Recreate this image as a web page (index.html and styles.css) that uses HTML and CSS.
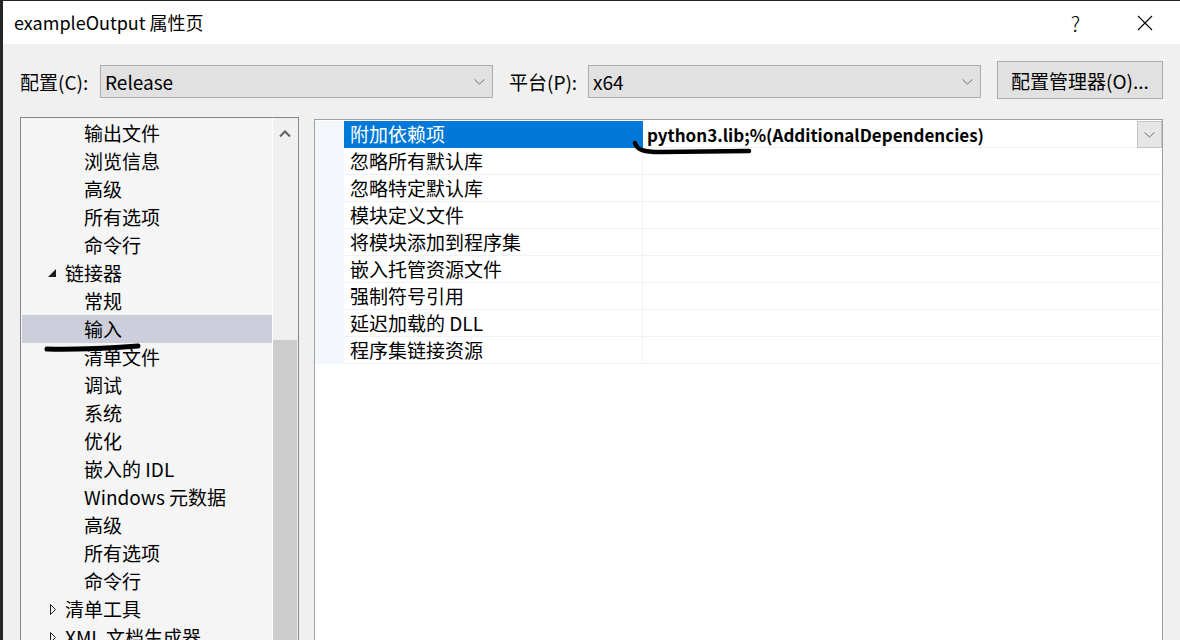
FILE: index.html
```html
<!DOCTYPE html>
<html lang="zh-CN">

<head>
    <meta charset="UTF-8">
    <title>exampleOutput 属性页</title>
    <link rel="stylesheet" href="styles.css">
</head>

<body>
    <div class="window">
        <div class="titlebar">
            <span class="title">exampleOutput 属性页</span>
            <span class="title-btn help">?</span>
            <span class="title-btn close">
                <svg width="16" height="16" viewBox="0 0 16 16"><path d="M1 1 L15 15 M15 1 L1 15" stroke="#000" stroke-width="1.1" fill="none"/></svg>
            </span>
        </div>

        <div class="content">
            <div class="config-row">
                <label class="config-label">配置(C):</label>
                <div class="select">
                    <span>Release</span>
                    <svg width="11" height="6" viewBox="0 0 11 6"><path d="M0.5 0.5 L5.5 5 L10.5 0.5" stroke="#707070" fill="none"/></svg>
                </div>
                <label class="config-label platform">平台(P):</label>
                <div class="select">
                    <span>x64</span>
                    <svg width="11" height="6" viewBox="0 0 11 6"><path d="M0.5 0.5 L5.5 5 L10.5 0.5" stroke="#707070" fill="none"/></svg>
                </div>
                <button class="btn">配置管理器(O)...</button>
            </div>

            <div class="panels">
                <div class="tree-panel">
                    <ul class="tree">
                        <li class="tree-item">输出文件</li>
                        <li class="tree-item">浏览信息</li>
                        <li class="tree-item">高级</li>
                        <li class="tree-item">所有选项</li>
                        <li class="tree-item">命令行</li>
                        <li class="tree-item parent">
                            <span class="caret"><svg width="18" height="28" viewBox="0 0 18 28"><polygon points="9,10 9,18 1,18" fill="#1e1e1e"/></svg></span>链接器
                        </li>
                        <li class="tree-item">常规</li>
                        <li class="tree-item selected">输入</li>
                        <li class="tree-item">清单文件</li>
                        <li class="tree-item">调试</li>
                        <li class="tree-item">系统</li>
                        <li class="tree-item">优化</li>
                        <li class="tree-item">嵌入的 IDL</li>
                        <li class="tree-item">Windows 元数据</li>
                        <li class="tree-item">高级</li>
                        <li class="tree-item">所有选项</li>
                        <li class="tree-item">命令行</li>
                        <li class="tree-item parent">
                            <span class="caret"><svg width="18" height="28" viewBox="0 0 18 28"><polygon points="3.5,9.5 8.5,14.5 3.5,19.5" fill="none" stroke="#1e1e1e"/></svg></span>清单工具
                        </li>
                        <li class="tree-item parent">
                            <span class="caret"><svg width="18" height="28" viewBox="0 0 18 28"><polygon points="3.5,9.5 8.5,14.5 3.5,19.5" fill="none" stroke="#1e1e1e"/></svg></span>XML 文档生成器
                        </li>
                    </ul>
                    <div class="scrollbar">
                        <div class="scroll-up">
                            <svg width="12" height="8" viewBox="0 0 12 8"><path d="M1 6.5 L6 1.5 L11 6.5" stroke="#606060" stroke-width="2" fill="none"/></svg>
                        </div>
                        <div class="scroll-thumb"></div>
                    </div>
                </div>

                <div class="prop-panel">
                    <div class="prop-row">
                        <div class="gutter"></div>
                        <div class="prop-name selected">附加依赖项</div>
                        <div class="prop-value">
                            <span class="value-text">python3.lib;%(AdditionalDependencies)</span>
                            <span class="value-drop">
                                <svg width="11" height="6" viewBox="0 0 11 6"><path d="M0.5 0.5 L5.5 5 L10.5 0.5" stroke="#707070" fill="none"/></svg>
                            </span>
                        </div>
                    </div>
                    <div class="prop-row"><div class="gutter"></div><div class="prop-name">忽略所有默认库</div><div class="prop-value"></div></div>
                    <div class="prop-row"><div class="gutter"></div><div class="prop-name">忽略特定默认库</div><div class="prop-value"></div></div>
                    <div class="prop-row"><div class="gutter"></div><div class="prop-name">模块定义文件</div><div class="prop-value"></div></div>
                    <div class="prop-row"><div class="gutter"></div><div class="prop-name">将模块添加到程序集</div><div class="prop-value"></div></div>
                    <div class="prop-row"><div class="gutter"></div><div class="prop-name">嵌入托管资源文件</div><div class="prop-value"></div></div>
                    <div class="prop-row"><div class="gutter"></div><div class="prop-name">强制符号引用</div><div class="prop-value"></div></div>
                    <div class="prop-row"><div class="gutter"></div><div class="prop-name">延迟加载的 DLL</div><div class="prop-value"></div></div>
                    <div class="prop-row"><div class="gutter"></div><div class="prop-name">程序集链接资源</div><div class="prop-value"></div></div>
                </div>
            </div>
        </div>
    </div>

    <!-- hand-drawn marks on top of the screenshot -->
    <svg class="marks" width="1180" height="640" viewBox="0 0 1180 640">
        <path d="M47 349 C 80 350, 110 348, 138 346" stroke="#000" stroke-width="5" stroke-linecap="round" fill="none"/>
        <path d="M635 143 C 637 150, 644 152, 660 152 L 749 151" stroke="#000" stroke-width="4.5" stroke-linecap="round" fill="none"/>
    </svg>
</body>

</html>
```

FILE: styles.css
```css
* {
    margin: 0;
    padding: 0;
    box-sizing: border-box;
}

html,
body {
    height: 100%;
    overflow: hidden;
}

body {
    position: relative;
    background-color: #262626;
    font-family: "Noto Sans CJK SC", "Noto Sans", sans-serif;
    font-size: 19px;
    color: #000;
}

.window {
    margin: 1px 0 0 3px;
    height: 639px;
    background-color: #f0f0f0;
    overflow: hidden;
}

.titlebar {
    height: 43px;
    background-color: #fff;
    display: flex;
    align-items: center;
    padding-left: 11px;
}

.title {
    flex: 1;
    font-size: 18px;
    line-height: 43px;
}

.title-btn {
    width: 69px;
    height: 43px;
    display: flex;
    align-items: center;
    justify-content: center;
}

.help {
    font-size: 21px;
    font-weight: 300;
}

.close {
    margin-right: 1px;
}

.content {
    padding: 17px 0 0 17px;
}

.config-row {
    display: flex;
    align-items: flex-start;
    height: 38px;
}

.config-label {
    width: 80px;
    height: 33px;
    margin-top: 4px;
    display: flex;
    align-items: center;
}

.config-label.platform {
    width: 79px;
    margin-left: 16px;
}

.select {
    width: 393px;
    height: 33px;
    margin-top: 4px;
    border: 1px solid #adadad;
    background-color: #e1e1e1;
    display: flex;
    align-items: center;
    justify-content: space-between;
    padding: 0 7px 0 4px;
}

.btn {
    width: 166px;
    height: 38px;
    margin-left: 16px;
    border: 1px solid #adadad;
    background-color: #e1e1e1;
    font-family: inherit;
    font-size: 19px;
    color: #000;
}

.panels {
    display: flex;
    gap: 15px;
    margin-top: 18px;
    height: 540px;
}

.tree-panel {
    width: 279px;
    border: 1px solid #828790;
    background-color: #f5f5f5;
    display: flex;
}

.tree {
    flex: 1;
    list-style: none;
    padding: 1px 0 0 1px;
    border-right: 1px solid #fff;
}

.tree-item {
    height: 28px;
    line-height: 28px;
    padding-left: 62px;
    white-space: nowrap;
    display: flex;
    align-items: center;
}

.tree-item.parent {
    padding-left: 25px;
}

.tree-item.selected {
    background-color: #cccedb;
}

.caret {
    width: 18px;
    height: 28px;
    display: flex;
}

.scrollbar {
    width: 25px;
    background-color: #f0f0f0;
    display: flex;
    flex-direction: column;
}

.scroll-up {
    height: 222px;
    display: flex;
    justify-content: center;
    padding: 12px 1px 0 0;
}

.scroll-thumb {
    flex: 1;
    width: 24px;
    background-color: #cdcdcd;
}

.prop-panel {
    width: 849px;
    margin-top: 2px;
    border: 1px solid #a0a0a0;
    background-color: #fff;
    padding-top: 1px;
}

.prop-row {
    display: flex;
    height: 27px;
}

.gutter {
    width: 29px;
    background-color: #f3f6fb;
}

.prop-name {
    width: 299px;
    padding-left: 6px;
    line-height: 26px;
    border-right: 1px solid #f0f2f6;
    border-bottom: 1px solid #eef1f6;
    white-space: nowrap;
}

.prop-name.selected {
    background-color: #0078d7;
    color: #fff;
    border-color: #0078d7;
}

.prop-value {
    flex: 1;
    display: flex;
    align-items: center;
    border-bottom: 1px solid #eef1f6;
    padding-left: 4px;
}

.value-text {
    flex: 1;
    font-weight: 700;
    font-size: 17px;
}

.value-drop {
    width: 25px;
    height: 27px;
    align-self: flex-start;
    background-color: #e6e6e6;
    border: 1px solid #c4c4c4;
    display: flex;
    align-items: center;
    justify-content: center;
}

.marks {
    position: absolute;
    left: 0;
    top: 0;
    pointer-events: none;
}
```
